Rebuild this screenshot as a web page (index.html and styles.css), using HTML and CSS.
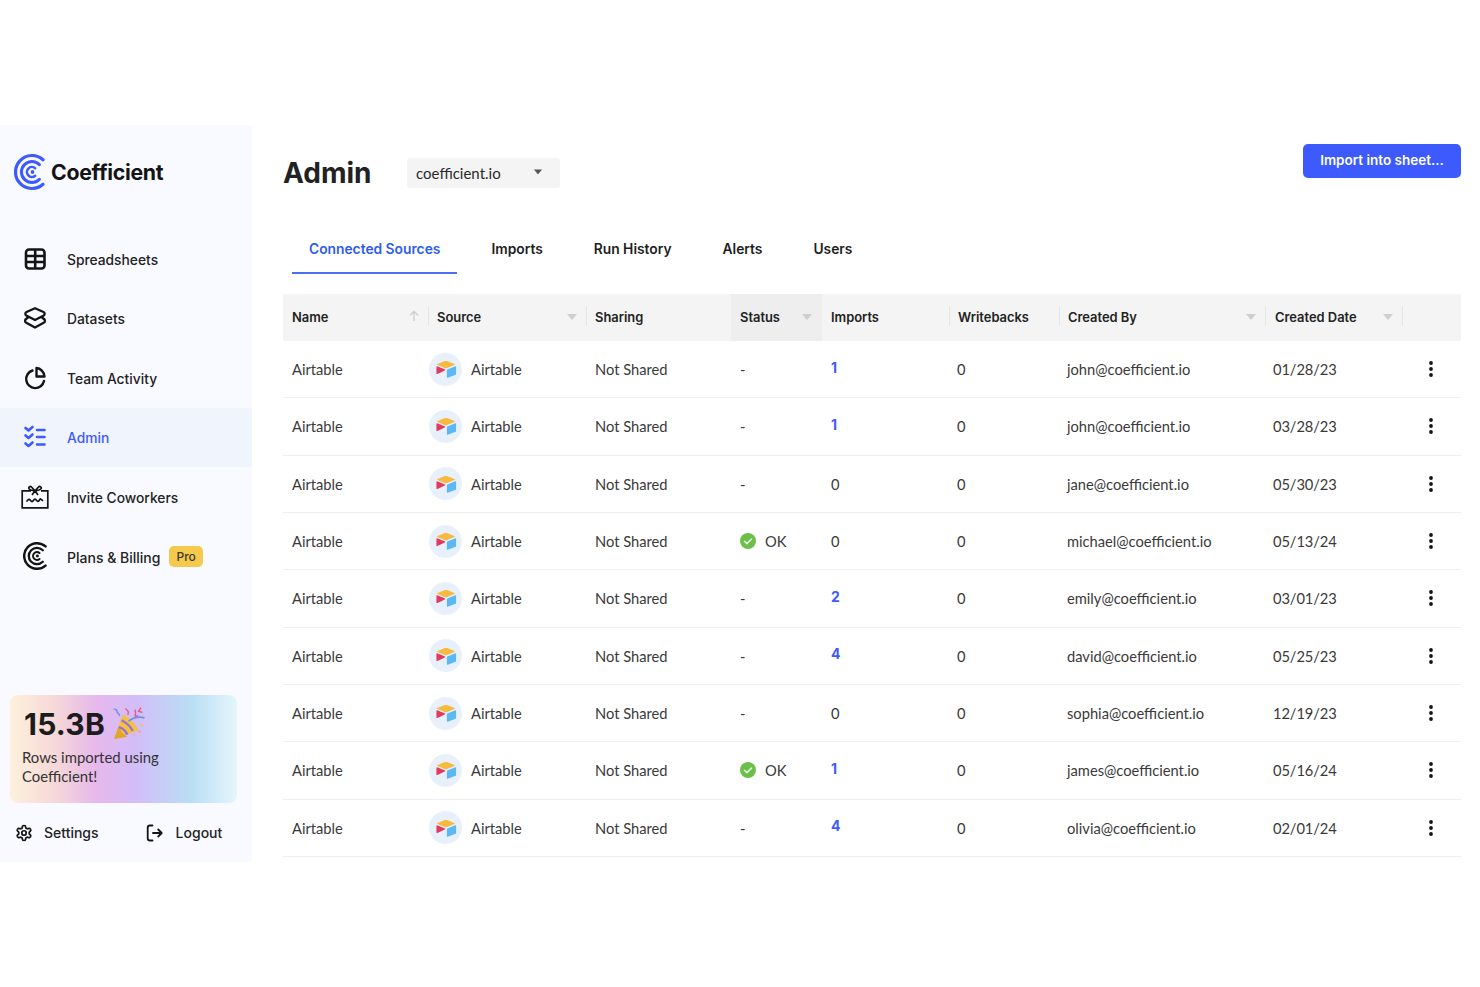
FILE: index.html
```html
<!DOCTYPE html>
<html lang="en">
<head>
<meta charset="utf-8">
<title>Coefficient Admin</title>
<link rel="stylesheet" href="styles.css">
</head>
<body>
<svg class="defs" width="0" height="0" aria-hidden="true">
  <symbol id="airtable" viewBox="0 0 24 22">
    <path fill="#f7b93e" d="M10.7 2.3 2.6 5.6c-.5.2-.5.9 0 1.1l8.1 3.2c.8.3 1.7.3 2.5 0l8.1-3.2c.5-.2.5-.9 0-1.1l-8.1-3.3c-.8-.3-1.7-.3-2.5 0z"/>
    <path fill="#5bb8f5" d="M13 12.1v8.1c0 .4.4.7.8.5l8.9-3.5c.2-.1.4-.3.4-.5V8.6c0-.4-.4-.7-.8-.5l-8.9 3.5c-.2.1-.4.3-.4.5z"/>
    <path fill="#e5385f" d="m11 12.5-2.7 1.3-.3.1-5.6 2.7c-.4.2-.9-.1-.9-.5V8.6c0-.2.1-.3.2-.4l.2-.1c.1-.1.3-.1.4 0l8.6 3.4c.5.2.5.8.1 1z"/>
  </symbol>
  <symbol id="check" viewBox="0 0 16 16">
    <circle cx="8" cy="8" r="8" fill="#6cc04a"/>
    <path d="m4.4 8.3 2.5 2.3 4.7-4.6" fill="none" stroke="#e8f6e0" stroke-width="1.5" stroke-linecap="round" stroke-linejoin="round"/>
  </symbol>
  <symbol id="funnel" viewBox="0 0 10 6">
    <path d="M0 0h10L5 6z" fill="#cfcfcf"/>
  </symbol>
  <symbol id="kebab" viewBox="0 0 4 16">
    <circle cx="2" cy="2" r="1.9"/><circle cx="2" cy="8" r="1.9"/><circle cx="2" cy="14" r="1.9"/>
  </symbol>
</svg>

<div class="app">
  <aside class="sidebar">
    <div class="brand">
      <svg class="brand-mark" viewBox="0 0 36 38" fill="none" stroke="#3d5afe" stroke-linecap="round">
        <path stroke-width="3.2" d="M29 6.7A16.5 16.5 0 1 0 29 31.3"/>
        <path stroke-width="3" d="M25.4 11.6A10.5 10.5 0 1 0 25.4 26.4"/>
        <path stroke-width="2.5" d="M21.2 15.2A5 5 0 1 0 21.2 22.8"/>
        <circle cx="18.5" cy="19" r="1.9" fill="#3d5afe" stroke="none"/>
      </svg>
      <span class="brand-name">Coefficient</span>
    </div>
    <nav class="nav">
      <a class="nav-item">
        <svg class="nav-icon" viewBox="0 0 24 24" fill="none" stroke="#141414" stroke-width="2.6"><rect x="3" y="2.5" width="18.5" height="19" rx="3"/><path d="M3 9h18.5M3 15h18.5M12.2 2.500v19"/></svg>
        <span class="nav-label">Spreadsheets</span>
      </a>
      <a class="nav-item">
        <svg class="nav-icon" viewBox="0 0 24 24" fill="none" stroke="#141414" stroke-width="2.3" stroke-linejoin="round" stroke-linecap="round"><path d="M12 2.2 20.5 6c1.5.7 1.5 2.6.2 3.5L12 14 3.3 9.500C2 8.600 2 6.700 3.500 6z"/><path d="M5 11.500 3 13c-1.300 1-1.300 3 .3 3.700L12 21.500l8.700-4.800c1.600-.7 1.600-2.700.3-3.700l-2-1.500"/></svg>
        <span class="nav-label">Datasets</span>
      </a>
      <a class="nav-item">
        <svg class="nav-icon" viewBox="0 0 24 24" fill="none" stroke="#141414" stroke-width="2.4" stroke-linejoin="round" stroke-linecap="round"><path d="M9.500 4.500A9 9 0 1 0 21 15"/><path d="M13.500 2c4 .3 7.600 3.800 8 8.500h-8z"/></svg>
        <span class="nav-label">Team Activity</span>
      </a>
      <a class="nav-item nav-item-active">
        <svg class="nav-icon" viewBox="0 0 24 24" fill="none" stroke="#3d5afe" stroke-width="2.6" stroke-linecap="round" stroke-linejoin="round"><path d="m2.500 3 3 2.500 4-3.500M2.500 10.500l3 2.500 4-3.500M2.500 18.500l3 2.500 4-3.500M14 5h7.500M14 12h7.500M14 19.500h7.500"/></svg>
        <span class="nav-label">Admin</span>
      </a>
      <a class="nav-item">
        <svg class="nav-icon nav-icon-wide" viewBox="0 0 28 24" fill="none" stroke="#141414" stroke-width="1.7"><path d="M10 5.800H1.200v17h25.600v-17H20"/><path d="M14 5.800 10.500 2c-1.300-1.300-3.500.5-2.300 2 .9 1 3.500 1.600 5.800 1.800zM14 5.800 17.500 2c1.300-1.300 3.500.5 2.300 2-.9 1-3.500 1.600-5.800 1.800zM14 5.800 11 10M14 5.800 17 10"/><path d="M6 16c1.500-2 2.500-2 3.500-.5s2 1.500 3-.2 2-1.500 3 0 2 1.500 3-.3 1.500-1 3 .5" stroke-linecap="round"/></svg>
        <span class="nav-label">Invite Coworkers</span>
      </a>
      <a class="nav-item">
        <svg class="nav-icon nav-icon-logo" viewBox="0 0 36 38" fill="none" stroke="#141414" stroke-linecap="round">
          <path stroke-width="3.2" d="M29 6.700A16.500 16.500 0 1 0 29 31.300"/>
          <path stroke-width="3" d="M25.400 11.600A10.500 10.500 0 1 0 25.400 26.400"/>
          <path stroke-width="2.6" d="M21.200 15.200A5 5 0 1 0 21.200 22.800"/>
          <circle cx="18.500" cy="19" r="1.900" fill="#141414" stroke="none"/>
        </svg>
        <span class="nav-label nav-label-plans">Plans &amp; Billing</span>
        <span class="pro">Pro</span>
      </a>
    </nav>
    <div class="promo">
      <div class="promo-head">
        <span class="promo-num">15.3B</span>
        <svg class="popper" viewBox="0 0 32 32">
          <path fill="#f3c23e" d="M2 30 10 7c5 2 13 9 15 15z"/>
          <path fill="#e0a52a" d="M2 30 6 18.500c2 4 5 7.500 8.500 9.500z"/>
          <path fill="none" stroke="#9a6fe0" stroke-width="2.2" d="M6.500 19c3 1 6 3 8 7M9 12.500c4 2 8 5 10.500 10"/>
          <path fill="none" stroke="#6a8ff0" stroke-width="1.6" stroke-linecap="round" d="M16 13c4-3 9-4 14-3"/>
          <path fill="none" stroke="#e0608a" stroke-width="1.4" stroke-linecap="round" d="M13 2c2 1 3 3 2 5M22 3c-1 2 1 2 0 4s1 2 2 1M27 1l-2 3 3 1"/>
          <path fill="none" stroke="#6f8ff0" stroke-width="1.4" stroke-linecap="round" d="M2 2c2 0 3 2 3 3s2 1 2 3"/>
          <circle cx="28" cy="17" r="1.2" fill="#eec15a"/><circle cx="26" cy="23" r="1.2" fill="#e9a0c0"/><circle cx="21" cy="26" r="1" fill="#e9a0c0"/>
        </svg>
      </div>
      <p class="promo-text">Rows imported using Coefficient!</p>
    </div>
    <div class="side-foot">
      <a class="foot-link foot-settings">
        <svg class="foot-icon" viewBox="0 0 24 24" fill="none" stroke="#141414" stroke-width="2.3" stroke-linejoin="round"><path d="M12.22 2h-.44a2 2 0 0 0-2 2v.18a2 2 0 0 1-1 1.73l-.43.25a2 2 0 0 1-2 0l-.15-.08a2 2 0 0 0-2.73.73l-.22.38a2 2 0 0 0 .73 2.73l.15.1a2 2 0 0 1 1 1.72v.51a2 2 0 0 1-1 1.74l-.15.09a2 2 0 0 0-.73 2.73l.22.38a2 2 0 0 0 2.73.73l.15-.08a2 2 0 0 1 2 0l.43.25a2 2 0 0 1 1 1.73V20a2 2 0 0 0 2 2h.44a2 2 0 0 0 2-2v-.18a2 2 0 0 1 1-1.73l.43-.25a2 2 0 0 1 2 0l.15.08a2 2 0 0 0 2.73-.73l.22-.39a2 2 0 0 0-.73-2.73l-.15-.08a2 2 0 0 1-1-1.74v-.5a2 2 0 0 1 1-1.74l.15-.09a2 2 0 0 0 .73-2.73l-.22-.38a2 2 0 0 0-2.73-.73l-.15.08a2 2 0 0 1-2 0l-.43-.25a2 2 0 0 1-1-1.73V4a2 2 0 0 0-2-2z"/><circle cx="12" cy="12" r="3"/></svg>
        <span>Settings</span>
      </a>
      <a class="foot-link foot-logout">
        <svg class="foot-icon" viewBox="0 0 18 18" fill="none" stroke="#141414" stroke-width="1.8" stroke-linecap="round" stroke-linejoin="round"><path d="M7.500 1.500H5C3.600 1.500 2.700 2.400 2.700 3.800v10.400c0 1.400.9 2.300 2.300 2.300h2.500M8 9h8.500M13.200 5.500 16.700 9l-3.500 3.500"/></svg>
        <span>Logout</span>
      </a>
    </div>
  </aside>

  <main class="main">
    <header class="top">
      <h1 class="title">Admin</h1>
      <div class="select"><span>coefficient.io</span><svg class="select-caret" viewBox="0 0 10 6"><path d="M0 0h10L5 6z" fill="#555"/></svg></div>
      <button class="import-btn" type="button">Import into sheet...</button>
    </header>

    <div class="tabs">
      <a class="tab tab-active">Connected Sources</a>
      <a class="tab">Imports</a>
      <a class="tab">Run History</a>
      <a class="tab">Alerts</a>
      <a class="tab">Users</a>
    </div>

    <div class="table">
      <div class="row head">
        <div class="th">Name<svg class="sort" viewBox="0 0 12 12" fill="none" stroke="#cfcfcf" stroke-width="1.3"><path d="M6 11V1.500M1.800 5.500 6 1.500l4.200 4"/></svg></div>
        <div class="th">Source<svg class="filter"><use href="#funnel"/></svg></div>
        <div class="th">Sharing</div>
        <div class="th th-active">Status<svg class="filter filter-status"><use href="#funnel"/></svg></div>
        <div class="th">Imports</div>
        <div class="th">Writebacks</div>
        <div class="th">Created By<svg class="filter"><use href="#funnel"/></svg></div>
        <div class="th th-date">Created Date<svg class="filter"><use href="#funnel"/></svg></div>
        <div class="th"></div>
      </div>

      <div class="row">
        <div class="td">Airtable</div>
        <div class="td td-source"><span class="src-badge"><svg class="src-logo"><use href="#airtable"/></svg></span>Airtable</div>
        <div class="td">Not Shared</div>
        <div class="td">-</div>
        <div class="td"><a class="count">1</a></div>
        <div class="td td-num">0</div>
        <div class="td td-mail">john@coefficient.io</div>
        <div class="td td-date">01/28/23</div>
        <div class="td td-act"><svg class="kebab"><use href="#kebab"/></svg></div>
      </div>
      <div class="row">
        <div class="td">Airtable</div>
        <div class="td td-source"><span class="src-badge"><svg class="src-logo"><use href="#airtable"/></svg></span>Airtable</div>
        <div class="td">Not Shared</div>
        <div class="td">-</div>
        <div class="td"><a class="count">1</a></div>
        <div class="td td-num">0</div>
        <div class="td td-mail">john@coefficient.io</div>
        <div class="td td-date">03/28/23</div>
        <div class="td td-act"><svg class="kebab"><use href="#kebab"/></svg></div>
      </div>
      <div class="row">
        <div class="td">Airtable</div>
        <div class="td td-source"><span class="src-badge"><svg class="src-logo"><use href="#airtable"/></svg></span>Airtable</div>
        <div class="td">Not Shared</div>
        <div class="td">-</div>
        <div class="td">0</div>
        <div class="td td-num">0</div>
        <div class="td td-mail">jane@coefficient.io</div>
        <div class="td td-date">05/30/23</div>
        <div class="td td-act"><svg class="kebab"><use href="#kebab"/></svg></div>
      </div>
      <div class="row">
        <div class="td">Airtable</div>
        <div class="td td-source"><span class="src-badge"><svg class="src-logo"><use href="#airtable"/></svg></span>Airtable</div>
        <div class="td">Not Shared</div>
        <div class="td td-status"><svg class="ok-icon"><use href="#check"/></svg>OK</div>
        <div class="td">0</div>
        <div class="td td-num">0</div>
        <div class="td td-mail">michael@coefficient.io</div>
        <div class="td td-date">05/13/24</div>
        <div class="td td-act"><svg class="kebab"><use href="#kebab"/></svg></div>
      </div>
      <div class="row">
        <div class="td">Airtable</div>
        <div class="td td-source"><span class="src-badge"><svg class="src-logo"><use href="#airtable"/></svg></span>Airtable</div>
        <div class="td">Not Shared</div>
        <div class="td">-</div>
        <div class="td"><a class="count">2</a></div>
        <div class="td td-num">0</div>
        <div class="td td-mail">emily@coefficient.io</div>
        <div class="td td-date">03/01/23</div>
        <div class="td td-act"><svg class="kebab"><use href="#kebab"/></svg></div>
      </div>
      <div class="row">
        <div class="td">Airtable</div>
        <div class="td td-source"><span class="src-badge"><svg class="src-logo"><use href="#airtable"/></svg></span>Airtable</div>
        <div class="td">Not Shared</div>
        <div class="td">-</div>
        <div class="td"><a class="count">4</a></div>
        <div class="td td-num">0</div>
        <div class="td td-mail">david@coefficient.io</div>
        <div class="td td-date">05/25/23</div>
        <div class="td td-act"><svg class="kebab"><use href="#kebab"/></svg></div>
      </div>
      <div class="row">
        <div class="td">Airtable</div>
        <div class="td td-source"><span class="src-badge"><svg class="src-logo"><use href="#airtable"/></svg></span>Airtable</div>
        <div class="td">Not Shared</div>
        <div class="td">-</div>
        <div class="td">0</div>
        <div class="td td-num">0</div>
        <div class="td td-mail">sophia@coefficient.io</div>
        <div class="td td-date">12/19/23</div>
        <div class="td td-act"><svg class="kebab"><use href="#kebab"/></svg></div>
      </div>
      <div class="row">
        <div class="td">Airtable</div>
        <div class="td td-source"><span class="src-badge"><svg class="src-logo"><use href="#airtable"/></svg></span>Airtable</div>
        <div class="td">Not Shared</div>
        <div class="td td-status"><svg class="ok-icon"><use href="#check"/></svg>OK</div>
        <div class="td"><a class="count">1</a></div>
        <div class="td td-num">0</div>
        <div class="td td-mail">james@coefficient.io</div>
        <div class="td td-date">05/16/24</div>
        <div class="td td-act"><svg class="kebab"><use href="#kebab"/></svg></div>
      </div>
      <div class="row">
        <div class="td">Airtable</div>
        <div class="td td-source"><span class="src-badge"><svg class="src-logo"><use href="#airtable"/></svg></span>Airtable</div>
        <div class="td">Not Shared</div>
        <div class="td">-</div>
        <div class="td"><a class="count">4</a></div>
        <div class="td td-num">0</div>
        <div class="td td-mail">olivia@coefficient.io</div>
        <div class="td td-date">02/01/24</div>
        <div class="td td-act"><svg class="kebab"><use href="#kebab"/></svg></div>
      </div>
    </div>
  </main>
</div>
</body>
</html>
```
FILE: styles.css
```css
* { box-sizing: border-box; }
html, body { margin: 0; background: #fff; }
body {
  padding-top: 125px;
  height: 987px;
  overflow: hidden;
  font-family: "Lato", "Liberation Sans", sans-serif;
  color: #2a2a2a;
}
.defs { display: block; height: 0; }

.app { display: flex; height: 737px; }

/* Sidebar */
.sidebar {
  width: 252px;
  flex: none;
  background: #f9faff;
  display: flex;
  flex-direction: column;
}
.brand {
  display: flex;
  align-items: center;
  gap: 1px;
  height: 38px;
  margin: 28px 0 0 14px;
}
.brand-mark { width: 36px; height: 38px; flex: none; }
.brand-name {
  font: 700 21.3px "Inter", sans-serif;
  letter-spacing: -0.3px;
  color: #141414;
}
.nav { display: flex; flex-direction: column; margin-top: 38px; }
.nav-item {
  display: flex;
  align-items: center;
  height: 59.5px;
  padding-left: 23px;
  font: 500 13.8px "Inter", sans-serif;
  color: #222;
}
.nav-label { padding-top: 2px; }
.nav-label-plans { font-size: 14px; }
.nav-item-active { background: #f0f4fd; color: #3d5afe; }
.nav-icon { width: 24px; height: 24px; margin-right: 20px; flex: none; }
.nav-icon-wide { width: 28px; margin-left: -2px; margin-right: 18px; }
.nav-icon-logo { width: 28px; height: 30px; margin-right: 16px; }
.pro {
  margin-left: 9px;
  padding: 0 7px;
  height: 21px;
  line-height: 21px;
  border-radius: 5px;
  background: #f5c94c;
  font-size: 12px;
  color: #3a3a2a;
}

.promo {
  margin: auto 15px 0 10px;
  height: 108px;
  border-radius: 8px;
  padding: 12px 12px 0;
  background: linear-gradient(90deg, #fdf1dc 0%, #f6d8d8 20%, #e6b8ec 38%, #d3bdf8 55%, #b9def4 80%, #e4f6fb 100%);
}
.promo-head { display: flex; align-items: center; gap: 7px; padding-left: 2px; }
.promo-num { font: 700 30px/34px "Inter", sans-serif; color: #1c1c1c; letter-spacing: 0.2px; }
.popper { width: 34px; height: 34px; }
.promo-text { margin: 7px 0 0; width: 150px; font-size: 14.9px; line-height: 19px; color: #333; }

.side-foot { display: flex; height: 59px; align-items: center; font: 500 14px "Inter", sans-serif; color: #222; }
.foot-link { display: flex; align-items: center; }
.foot-icon { width: 18px; height: 18px; flex: none; }
.foot-settings { margin-left: 15px; gap: 11px; }
.foot-logout { margin-left: 46px; gap: 13px; }

/* Main */
.main { flex: 1; min-width: 0; padding: 19px 19px 0 31px; }
.top { display: flex; align-items: flex-start; height: 60px; }
.title { margin: 9px 0 0; font: 700 28px/40px "Inter", sans-serif; color: #222; width: 124px; }
.select {
  margin-top: 14px;
  width: 153px;
  height: 30px;
  padding: 0 18px 0 9px;
  background: #f4f4f4;
  border-radius: 3px;
  display: flex;
  align-items: center;
  justify-content: space-between;
  font-size: 15px;
  color: #2a2a2a;
}
.select-caret { width: 8px; height: 6px; margin-top: -2px; }
.import-btn {
  margin-left: auto;
  width: 158px;
  height: 34px;
  border: 0;
  border-radius: 5px;
  padding: 0 0 3px;
  background: #3d5afe;
  color: #fff;
  font: 600 13.5px "Inter", sans-serif;
}

.tabs { display: flex; gap: 17px; margin: 27px 0 0 9px; height: 43px; }
.tab {
  padding: 8px 17px 0;
  height: 43px;
  font: 600 13.8px/20px "Inter", sans-serif;
  color: #1e1e1e;
}
.tab-active { color: #2f5cf0; border-bottom: 2px solid #4a6ff0; }

/* Table */
.table { margin-top: 20px; }
.row {
  display: grid;
  grid-template-columns: 145px 158px 145px 91px 127px 110px 206px 137px 59px;
  height: 57.33px;
  border-bottom: 1px solid #f0f0f0;
  align-items: center;
}
.row.head { height: 47px; background: #f4f4f4; border-bottom: 0; align-items: stretch; }
.th {
  position: relative;
  display: flex;
  align-items: center;
  padding: 0 0 1px 9px;
  font: 600 12.9px "Inter", sans-serif;
  color: #222;
}
.th::after {
  content: "";
  position: absolute;
  right: -1px;
  top: 12px;
  height: 20px;
  width: 1px;
  background: #e6e6e6;
}
.th:nth-child(3)::after, .th:nth-child(4)::after, .th:last-child::after { display: none; }
.th-active { background: #eeeeee; }
.th-date { padding-left: 10px; }
.sort { width: 12px; height: 12px; position: absolute; right: 8px; top: 16px; }
.filter { width: 10px; height: 6px; position: absolute; right: 9px; top: 20px; }
.filter-status { right: 10px; }
.td { padding-left: 9px; font-size: 14.7px; color: #3a3a3a; white-space: nowrap; }
.td-source { display: flex; align-items: center; padding-left: 1px; }
.src-badge {
  width: 33px;
  height: 33px;
  border-radius: 50%;
  background: #e8f1fb;
  display: flex;
  align-items: center;
  justify-content: center;
  margin-right: 9px;
}
.src-logo { width: 22px; height: 20px; }
.td-status { display: flex; align-items: center; }
.ok-icon { width: 16px; height: 16px; margin-right: 9px; }
.count { display: block; margin-top: -4px; font: 700 14px "Inter", sans-serif; color: #3d5afe; }
.td-num, .td-mail { padding-left: 8px; }
.td-date { padding-left: 8px; letter-spacing: -0.1px; }
.td-act { padding-left: 27px; line-height: 0; }
.kebab { width: 4px; height: 16px; fill: #141414; }
```
